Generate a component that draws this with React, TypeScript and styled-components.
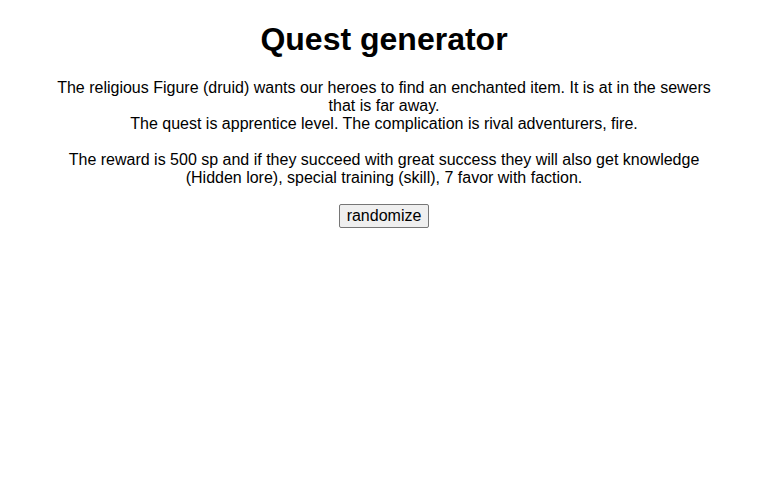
import React, { useState } from "react";
import styled, { createGlobalStyle } from "styled-components";

const GlobalStyle = createGlobalStyle`
  body {
    margin: 8px;
    background: #ffffff;
    color: #000000;
    font-family: "Liberation Sans", Arial, sans-serif;
  }
`;

interface Quest {
  giver: string;
  wants: string;
  place: string;
  distance: string;
  level: string;
  complication: string;
  reward: string;
  bonus: string;
}

const quests: Quest[] = [
  {
    giver: "religious Figure (druid)",
    wants: "find an enchanted item",
    place: "in the sewers",
    distance: "far away",
    level: "apprentice",
    complication: "rival adventurers, fire",
    reward: "500 sp",
    bonus: "knowledge (Hidden lore), special training (skill), 7 favor with faction",
  },
  {
    giver: "noble Patron (baron)",
    wants: "rescue a missing scholar",
    place: "in the old mines",
    distance: "close by",
    level: "journeyman",
    complication: "betrayal, bad weather",
    reward: "300 gp",
    bonus: "a magic item, 3 favor with the crown",
  },
];

const Quest: React.FC = () => {
  const [index, setIndex] = useState<number>(0);
  const quest = quests[index];

  const handleRandomize = () => {
    setIndex(Math.floor(Math.random() * quests.length));
  };

  return (
    <Wrapper>
      <Title>Quest generator</Title>
      <Text>
        The {quest.giver} wants our heroes to {quest.wants}. It is at{" "}
        {quest.place} that is {quest.distance}.
        <br />
        The quest is {quest.level} level. The complication is{" "}
        {quest.complication}.
        <br />
        <br />
        The reward is {quest.reward} and if they succeed with great success
        they will also get {quest.bonus}.
      </Text>
      <Button onClick={handleRandomize}>randomize</Button>
    </Wrapper>
  );
};

const Wrapper = styled.div`
  display: flex;
  flex-direction: column;
  align-items: center;
  text-align: center;
`;

const Title = styled.h1`
  margin: 13px 0 21px 0;
  font-size: 32px;
  font-weight: bold;
  line-height: 37px;
`;

const Text = styled.div`
  max-width: 670px;
  font-size: 16px;
  line-height: 18px;
`;

const Button = styled.button`
  margin-top: 17px;
  padding: 2px 7px;
  border: 1px solid #767676;
  border-radius: 2px;
  background-color: #efefef;
  color: #000000;
  font-family: "Liberation Sans", Arial, sans-serif;
  font-size: 16px;
  line-height: 18px;
  cursor: pointer;
`;

export default function App() {
  return (
    <>
      <GlobalStyle />
      <Quest />
    </>
  );
}
